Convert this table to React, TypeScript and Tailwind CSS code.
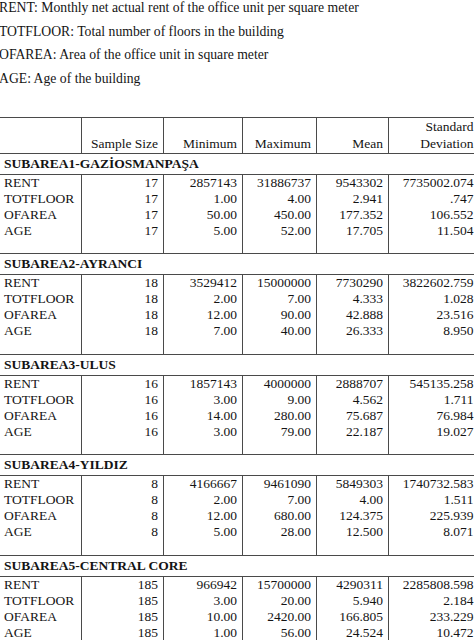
import React from "react";

type Row = [string, string, string, string, string, string];

interface Block {
  title: string;
  rows: Row[];
}

const notes = [
  "RENT: Monthly net actual rent of the office unit per square meter",
  "TOTFLOOR: Total number of floors in the building",
  "OFAREA: Area of the office unit in square meter",
  "AGE: Age of the building",
];

const blocks: Block[] = [
  {
    title: "SUBAREA1-GAZİOSMANPAŞA",
    rows: [
      ["RENT", "17", "2857143", "31886737", "9543302", "7735002.074"],
      ["TOTFLOOR", "17", "1.00", "4.00", "2.941", ".747"],
      ["OFAREA", "17", "50.00", "450.00", "177.352", "106.552"],
      ["AGE", "17", "5.00", "52.00", "17.705", "11.504"],
    ],
  },
  {
    title: "SUBAREA2-AYRANCI",
    rows: [
      ["RENT", "18", "3529412", "15000000", "7730290", "3822602.759"],
      ["TOTFLOOR", "18", "2.00", "7.00", "4.333", "1.028"],
      ["OFAREA", "18", "12.00", "90.00", "42.888", "23.516"],
      ["AGE", "18", "7.00", "40.00", "26.333", "8.950"],
    ],
  },
  {
    title: "SUBAREA3-ULUS",
    rows: [
      ["RENT", "16", "1857143", "4000000", "2888707", "545135.258"],
      ["TOTFLOOR", "16", "3.00", "9.00", "4.562", "1.711"],
      ["OFAREA", "16", "14.00", "280.00", "75.687", "76.984"],
      ["AGE", "16", "3.00", "79.00", "22.187", "19.027"],
    ],
  },
  {
    title: "SUBAREA4-YILDIZ",
    rows: [
      ["RENT", "8", "4166667", "9461090", "5849303", "1740732.583"],
      ["TOTFLOOR", "8", "2.00", "7.00", "4.00", "1.511"],
      ["OFAREA", "8", "12.00", "680.00", "124.375", "225.939"],
      ["AGE", "8", "5.00", "28.00", "12.500", "8.071"],
    ],
  },
  {
    title: "SUBAREA5-CENTRAL CORE",
    rows: [
      ["RENT", "185", "966942", "15700000", "4290311", "2285808.598"],
      ["TOTFLOOR", "185", "3.00", "20.00", "5.940", "2.184"],
      ["OFAREA", "185", "10.00", "2420.00", "166.805", "233.229"],
      ["AGE", "185", "1.00", "56.00", "24.524", "10.472"],
    ],
  },
];

const headers = ["", "Sample Size", "Minimum", "Maximum", "Mean", "Standard Deviation"];

const cellFont = "font-['Liberation_Serif',serif] text-[13.5px] text-[#141414]";

export default function App() {
  return (
    <div className="w-[474px] h-[640px] overflow-hidden bg-white text-[#141414] font-['Liberation_Serif',serif]">
      {/* legend */}
      <div className="flex flex-col gap-[7.5px] -ml-[1px] text-[13.7px] leading-[16px]">
        {notes.map((n) => (
          <p key={n} className="whitespace-nowrap">{n}</p>
        ))}
      </div>

      <table className="mt-[30px] w-[478px] table-fixed border-collapse">
        <colgroup>
          <col className="w-[81px]" />
          <col className="w-[82px]" />
          <col className="w-[79px]" />
          <col className="w-[74px]" />
          <col className="w-[72px]" />
          <col className="w-[90px]" />
        </colgroup>
        <thead>
          <tr className="h-[35px]">
            {headers.map((h, i) => (
              <th
                key={i}
                className={`${cellFont} p-0 pr-[4.5px] pb-[1px] align-bottom text-right font-normal leading-[17px] border-t border-b border-[#4a4a4a] ${
                  i < 5 ? "border-r" : ""
                }`}
              >
                {h}
              </th>
            ))}
          </tr>
        </thead>
        {blocks.map((b) => (
          <tbody key={b.title}>
            <tr className="h-[21px]">
              <td
                colSpan={6}
                className={`${cellFont} p-0 pl-[4px] align-middle text-left font-bold leading-[16px] whitespace-nowrap border-t border-b border-[#4a4a4a]`}
              >
                {b.title}
              </td>
            </tr>
            {b.rows.map((r) => (
              <tr key={r[0]} className="h-[16px]">
                {r.map((c, i) => (
                  <td
                    key={i}
                    className={`${cellFont} p-0 leading-[16px] whitespace-nowrap border-[#4a4a4a] ${
                      i === 0 ? "pl-[4px] text-left" : "pr-[4.5px] text-right"
                    } ${i < 5 ? "border-r" : ""}`}
                  >
                    {c}
                  </td>
                ))}
              </tr>
            ))}
            <tr className="h-[15px]">
              {[0, 1, 2, 3, 4, 5].map((i) => (
                <td key={i} className={`p-0 border-[#4a4a4a] ${i < 5 ? "border-r" : ""}`} />
              ))}
            </tr>
          </tbody>
        ))}
      </table>
    </div>
  );
}
